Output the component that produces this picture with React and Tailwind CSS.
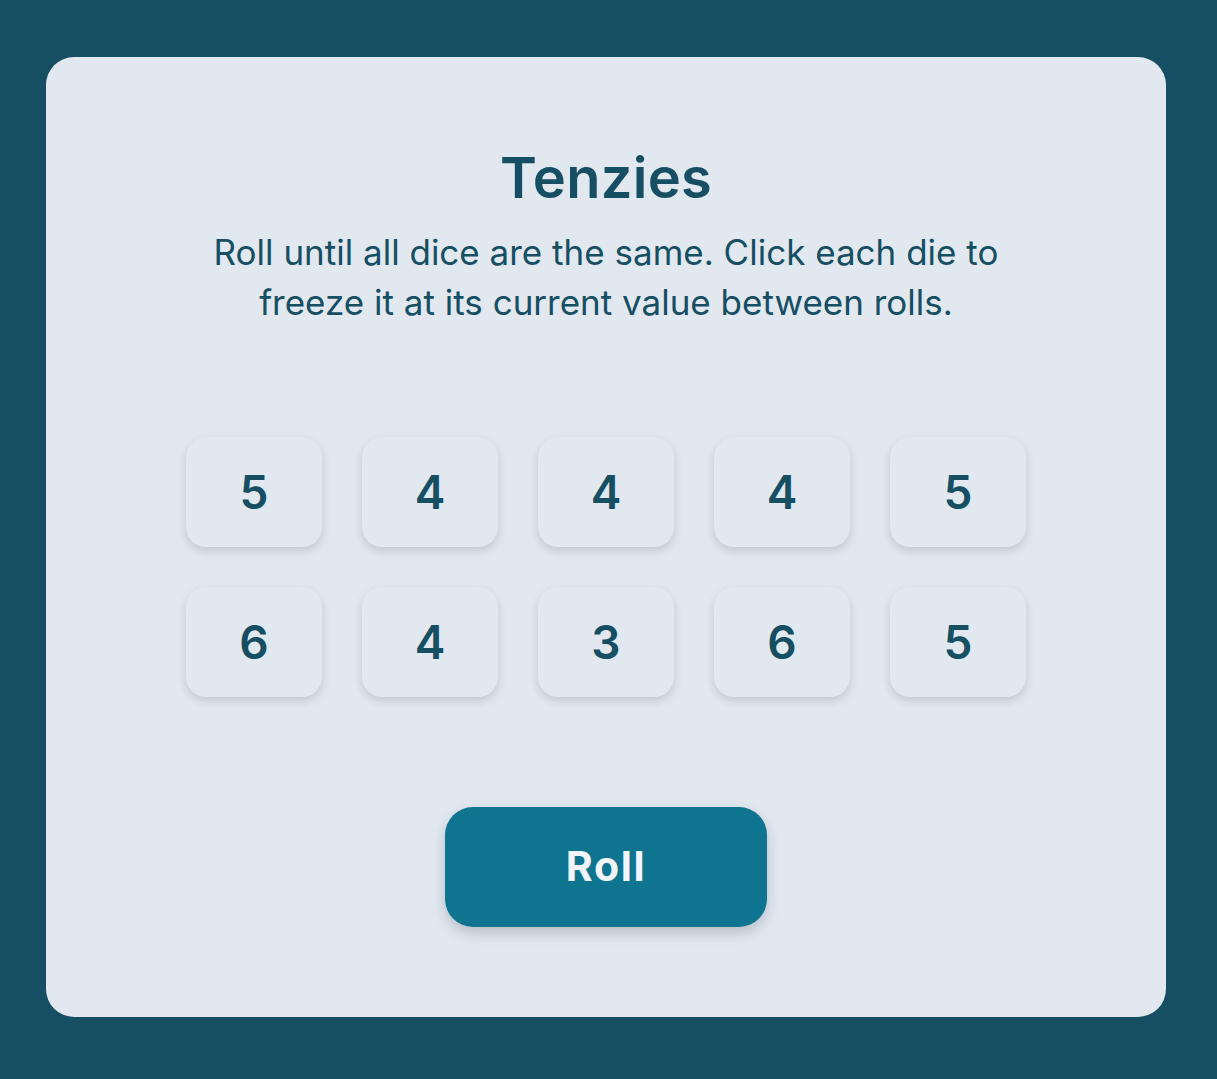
import { useState } from "react";

const startDice = [5, 4, 4, 4, 5, 6, 4, 3, 6, 5];

const Die = ({ value }) => {
  return (
    <button className="w-[136px] h-[110px] rounded-[20px] bg-[#e2e8f0] shadow-[0_4px_10px_rgba(15,23,42,0.15)] flex items-center justify-center text-[46px] font-semibold text-[#164e63]">
      {value}
    </button>
  );
};

const App = () => {
  const [dice, setDice] = useState(startDice);

  const rollDice = () => {
    setDice(dice.map(() => Math.ceil(Math.random() * 6)));
  };

  return (
    <div
      className="min-h-screen bg-[#164e63] pl-[46px] pt-[57px] pb-[62px]"
      style={{ fontFamily: "Inter, 'Noto Sans', sans-serif" }}
    >
      <main className="w-[1120px] h-[960px] rounded-[28px] bg-[#e2e8f0] flex flex-col items-center pt-[88px]">
        <h1 className="text-[56px] leading-[67px] font-semibold tracking-[0.005em] text-[#164e63]">
          Tenzies
        </h1>
        <p className="mt-[15px] max-w-[820px] text-center text-[35px] leading-[50px] text-[#164e63]">
          Roll until all dice are the same. Click each die to freeze it at its
          current value between rolls.
        </p>

        <div className="mt-[110px] grid grid-cols-5 gap-[40px]">
          {dice.map((value, i) => (
            <Die key={i} value={value} />
          ))}
        </div>

        {/* Roll button */}
        <button
          onClick={rollDice}
          className="mt-[110px] w-[322px] h-[120px] rounded-[28px] bg-[#0f7490] shadow-[0_6px_14px_rgba(15,23,42,0.2)] text-[41px] font-bold tracking-[0.04em] text-[#f1f5f9]"
        >
          Roll
        </button>
      </main>
    </div>
  );
};

export default App;
